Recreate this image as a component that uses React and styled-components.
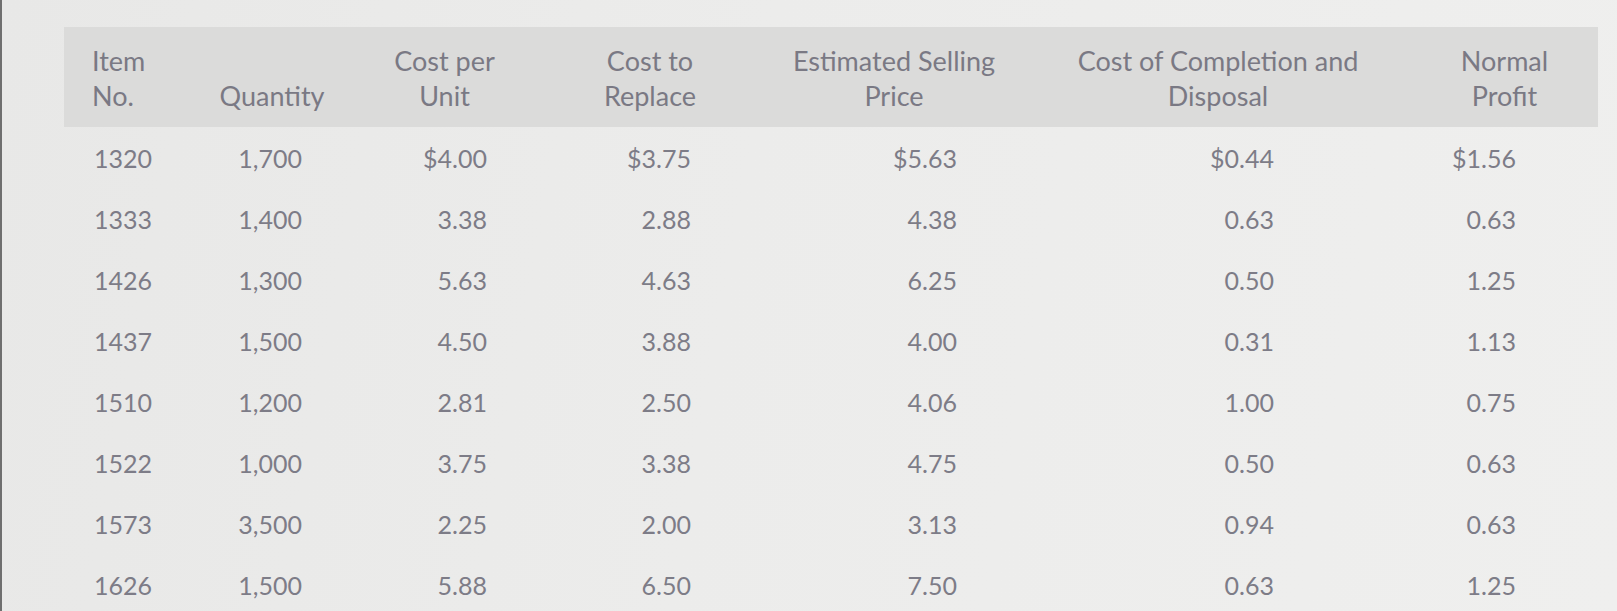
import React from 'react'
import styled, { createGlobalStyle } from 'styled-components'

const GlobalStyle = createGlobalStyle`
    html, body {
        margin: 0;
        padding: 0;
        background: #ebebea;
    }
    body {
        font-family: Lato, "Open Sans", sans-serif;
    }
`

const columns = [
    { head: ['Item', 'No.'], width: 128, headAlign: 'left', pl: 28, dataAlign: 'left', dpl: 30 },
    { head: ['Quantity'], width: 160, headAlign: 'center', dataAlign: 'right', dpr: 50 },
    { head: ['Cost per', 'Unit'], width: 185, headAlign: 'center', dataAlign: 'right', dpr: 50 },
    { head: ['Cost to', 'Replace'], width: 226, headAlign: 'center', dataAlign: 'right', dpr: 72 },
    { head: ['Estimated Selling', 'Price'], width: 262, headAlign: 'center', dataAlign: 'right', dpr: 68 },
    { head: ['Cost of Completion and', 'Disposal'], width: 386, headAlign: 'center', dataAlign: 'right', dpr: 137 },
    { head: ['Normal', 'Profit'], width: 187, headAlign: 'center', dataAlign: 'right', dpr: 82 },
]

const rows = [
    ['1320', '1,700', '$4.00', '$3.75', '$5.63', '$0.44', '$1.56'],
    ['1333', '1,400', '3.38', '2.88', '4.38', '0.63', '0.63'],
    ['1426', '1,300', '5.63', '4.63', '6.25', '0.50', '1.25'],
    ['1437', '1,500', '4.50', '3.88', '4.00', '0.31', '1.13'],
    ['1510', '1,200', '2.81', '2.50', '4.06', '1.00', '0.75'],
    ['1522', '1,000', '3.75', '3.38', '4.75', '0.50', '0.63'],
    ['1573', '3,500', '2.25', '2.00', '3.13', '0.94', '0.63'],
    ['1626', '1,500', '5.88', '6.50', '7.50', '0.63', '1.25'],
]

const App = () => {
    const template = columns.map(c => `${c.width}px`).join(' ')

    return (
        <>
            <GlobalStyle />
            <Page>
                <Table $template={template}>
                    <HeaderRow>
                        {columns.map((c, i) => (
                            <HeaderCell key={i} $align={c.headAlign} $pl={c.pl || 0}>
                                {c.head.map((line, j) => <span key={j}>{line}</span>)}
                            </HeaderCell>
                        ))}
                    </HeaderRow>
                    {rows.map((r, i) => (
                        <DataRow key={i}>
                            {r.map((val, j) => (
                                <DataCell
                                    key={j}
                                    $align={columns[j].dataAlign}
                                    $pl={columns[j].dpl || 0}
                                    $pr={columns[j].dpr || 0}
                                >
                                    {val}
                                </DataCell>
                            ))}
                        </DataRow>
                    ))}
                </Table>
            </Page>
        </>
    )
}

const Page = styled.div`
    min-height: 611px;
    box-sizing: border-box;
    padding: 27px 0 0 62px;
    border-left: 2px solid #6f6f6f;
    background: linear-gradient(100deg, #e8e8e7 0%, #ececeb 45%, #efefee 100%);
    overflow: hidden;
`
const Table = styled.div`
    display: grid;
    grid-template-columns: ${p => p.$template};
    width: 1534px;
`
const HeaderRow = styled.div`
    display: contents;
`
const HeaderCell = styled.div`
    background: #dbdbda;
    height: 100px;
    box-sizing: border-box;
    padding: 15px 0 14px ${p => p.$pl}px;
    display: flex;
    flex-direction: column;
    justify-content: flex-end;
    align-items: ${p => (p.$align === 'left' ? 'flex-start' : 'center')};
    color: #7a7984;
    font-size: 27px;
    line-height: 35px;
    white-space: nowrap;
`
const DataRow = styled.div`
    display: contents;
`
const DataCell = styled.div`
    height: 61px;
    display: flex;
    align-items: center;
    justify-content: ${p => (p.$align === 'left' ? 'flex-start' : 'flex-end')};
    padding-left: ${p => p.$pl}px;
    padding-right: ${p => p.$pr}px;
    color: #7d7c87;
    font-size: 25px;
    white-space: nowrap;
`

export default App
